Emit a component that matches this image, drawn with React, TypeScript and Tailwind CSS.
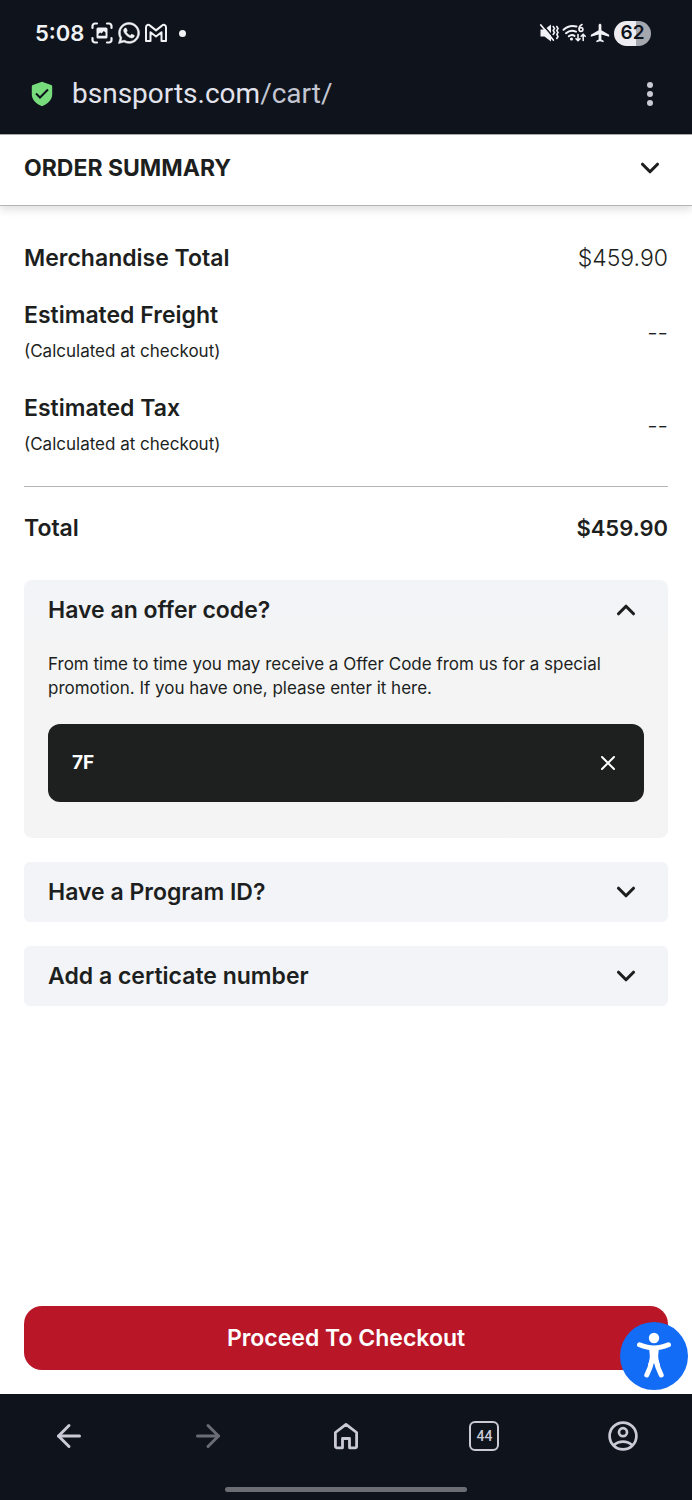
import { useState } from 'react';
import type { ReactNode } from 'react';
import { ArrowLeft, ArrowRight, ChevronDown, ChevronUp, X } from 'lucide-react';
import { FaWhatsapp } from 'react-icons/fa';
import { MdAirplanemodeActive } from 'react-icons/md';

const ScreenshotIcon = () => (
  <svg viewBox="0 0 24 24" className="h-6 w-6" fill="none" stroke="currentColor" strokeWidth="2.2" strokeLinecap="round">
    <path d="M2.5 7V5A2.5 2.5 0 0 1 5 2.500h2M17 2.500h2A2.500 2.500 0 0 1 21.500 5v2M21.500 17v2a2.500 2.500 0 0 1-2.500 2.500h-2M7 21.500H5A2.500 2.500 0 0 1 2.500 19v-2" />
    <path
      d="M8 6.500h8a1.500 1.500 0 0 1 1.500 1.500v8a1.500 1.500 0 0 1-1.500 1.500H8A1.500 1.500 0 0 1 6.500 16V8A1.500 1.500 0 0 1 8 6.500Zm.5 8.300h7v-3.300l-1.700-1.400-2.300 2.300-1.300-.8-1.700 1.400Z"
      fill="currentColor"
      fillRule="evenodd"
      stroke="none"
    />
  </svg>
);

const MailIcon = () => (
  <svg viewBox="0 0 24 20" className="h-5 w-6" fill="none" stroke="currentColor" strokeWidth="2" strokeLinejoin="round">
    <path d="M2 4.200C2 1.800 4.400 1.200 6 2.600l6 4.800 6-4.800c1.600-1.400 4-.8 4 1.600V18h-4.500V9.200L12 13.500 6.500 9.200V18H2Z" />
  </svg>
);

const MuteIcon = () => (
  <svg viewBox="0 0 20 20" className="h-5 w-5" fill="none" stroke="currentColor" strokeLinecap="round">
    <path d="M1.500 6.500h4L12 1.500v17l-6.500-5h-4Z" fill="currentColor" stroke="none" />
    <path d="M3.500 1.500l12.500 14.500" stroke="#0f131c" strokeWidth="1.600" />
    <path d="M1.800 2l12.500 15" strokeWidth="1.800" />
    <path d="M14.200 3.500l1.300 2-1.300 2 1.300 2-1.300 2M17.800 3.500l1.200 2-1.200 2 1.200 2-1.200 2 1.200 2-1.200 2" strokeWidth="1.600" />
  </svg>
);

const WifiIcon = () => (
  <svg viewBox="0 0 24 20" className="h-5 w-6" fill="none" stroke="currentColor" strokeWidth="2" strokeLinecap="round">
    <path d="M1.500 6.800C5.500 3 10 2.200 14.500 3.500M4 10.200c3-2.700 6.500-3.200 10-1.600M6.800 13.300c1.800-1.500 4-1.600 5.700-.4" />
    <circle cx="9.500" cy="16" r="1.600" fill="currentColor" stroke="none" />
    <circle cx="19" cy="6.500" r="1.900" strokeWidth="1.600" />
    <path d="M20 1.500c-1.800.8-2.900 2.500-2.900 4.500" strokeWidth="1.600" />
    <path d="M16 11.500v6M14 15.700l2 2 2-2M21.200 17.500v-6M19.200 13.300l2-2 2 2" strokeWidth="1.600" />
  </svg>
);

const ShieldIcon = () => (
  <svg viewBox="0 0 22 26" className="h-[26px] w-[22px] shrink-0">
    <path d="M11 .8 20.200 4c.7.200 1 .7 1 1.400v8.100c0 5.500-4.600 9.400-10.200 11.700C5.400 22.900.8 19 .8 13.500V5.400C.8 4.700 1.100 4.200 1.800 4Z" fill="#77dd7c" />
    <path d="m5 12.500 4 4 8-8" fill="none" stroke="#0f131c" strokeWidth="2" />
  </svg>
);

const HomeIcon = () => (
  <svg viewBox="0 0 26 28" className="h-7 w-[26px]" fill="none" stroke="currentColor" strokeWidth="2.800" strokeLinejoin="round">
    <path d="M2.400 10.500 13 2.400l10.600 8.100v13.700a1.600 1.600 0 0 1-1.600 1.600h-5.500v-9.300h-7v9.300H4a1.600 1.600 0 0 1-1.600-1.600Z" />
  </svg>
);

const AccountIcon = () => (
  <svg viewBox="0 0 30 30" className="h-[30px] w-[30px]" fill="none" stroke="currentColor" strokeWidth="2.700">
    <circle cx="15" cy="15" r="13.400" />
    <circle cx="15" cy="11.200" r="4" />
    <path d="M5.800 24.300c2.500-2.400 5.600-3.700 9.200-3.700s6.700 1.300 9.200 3.700" />
  </svg>
);

const AccessibilityIcon = () => (
  <svg viewBox="0 0 68 68" className="h-full w-full" fill="none" stroke="#fff" strokeWidth="5" strokeLinecap="round" strokeLinejoin="round">
    <circle cx="34" cy="16" r="5.200" fill="#fff" stroke="none" />
    <path d="M19.500 22.800c4.500 1.800 9.500 3.200 14.500 3.200s10-1.400 14.500-3.200" />
    <path d="M29 25h10l-.8 8.500c0 4 .8 6.500 1.800 9.500h-4L34 40.500 32 43h-4c1-3 1.800-5.500 1.800-9.500Z" fill="#fff" stroke="none" />
    <path d="M32 38.500c-1 5-3 10-5.200 14.500M36 38.500c1 5 3 10 5.200 14.500" />
  </svg>
);

const StatusBar = () => (
  <div className="flex h-[66px] items-center justify-between pr-[41px] pl-[35px] text-[#f1f2f5]">
    <div className="flex items-center gap-[3px]">
      <span className="mr-[3px] font-['Inter',sans-serif] text-[22px] leading-7 font-semibold">5:08</span>
      <ScreenshotIcon />
      <FaWhatsapp className="h-6 w-6" stroke="currentColor" strokeWidth={12} />
      <MailIcon />
      <span className="ml-2 h-[7px] w-[7px] rounded-full bg-[#f1f2f5]" />
    </div>
    <div className="flex items-center gap-[3px]">
      <MuteIcon />
      <WifiIcon />
      <MdAirplanemodeActive className="h-[22px] w-[22px]" />
      <span className="flex h-[25px] w-[37px] items-center justify-center rounded-full bg-linear-to-r from-[#ececf1] from-60% to-[#a4a7ae] to-60% font-['Inter',sans-serif] text-[19px] font-semibold text-[#0f131c]">
        62
      </span>
    </div>
  </div>
);

const AddressBar = () => (
  <div className="flex h-14 items-center pr-9 pl-[31px]">
    <ShieldIcon />
    <a href="#cart" className="ml-[19px] font-['Roboto',sans-serif] text-[28px] leading-9 text-[#e2e3ec]">
      bsnsports.com<span className="text-[#c3c5d0]">/cart/</span>
    </a>
    <button type="button" aria-label="Menu" className="ml-auto flex w-3 flex-col items-center gap-[3px]">
      <span className="h-[6px] w-[6px] rounded-full bg-[#c9cad6]" />
      <span className="h-[6px] w-[6px] rounded-full bg-[#c9cad6]" />
      <span className="h-[6px] w-[6px] rounded-full bg-[#c9cad6]" />
    </button>
  </div>
);

interface RowProps {
  label: string;
  note?: string;
  value: string;
  bold?: boolean;
}

const SummaryRow = ({ label, note, value, bold }: RowProps) => (
  <div className="flex items-center justify-between leading-7">
    <dt>
      <div className="text-[23px] font-semibold">{label}</div>
      {note && <div className="mt-2 text-[17px]">{note}</div>}
    </dt>
    <dd className={bold ? 'text-[22px] font-semibold' : 'text-[23px] font-light'}>{value}</dd>
  </div>
);

interface PanelProps {
  title: string;
  defaultOpen?: boolean;
  children?: ReactNode;
}

const Panel = ({ title, defaultOpen = false, children }: PanelProps) => {
  const [open, setOpen] = useState(defaultOpen);
  const Chevron = open ? ChevronUp : ChevronDown;

  return (
    <section className={open ? 'rounded-lg bg-linear-to-b from-[#f2f4f8] to-[#f4f4f4] to-30%' : 'rounded-md bg-[#f2f4f7]'}>
      <button
        type="button"
        aria-expanded={open}
        onClick={() => setOpen(!open)}
        className="flex h-[60px] w-full items-center justify-between pr-[27px] pl-6 text-[23px] leading-7 font-semibold"
      >
        {title}
        <Chevron className="h-[30px] w-[30px]" strokeWidth={2.5} />
      </button>
      {open && children}
    </section>
  );
};

export default function App() {
  const [code, setCode] = useState('7F');

  return (
    <div className="flex min-h-screen flex-col bg-white font-['Inter',sans-serif] text-[#1d1f1e]">
      <header className="border-b border-[#a9abae] bg-[#0f131c] pb-3">
        <StatusBar />
        <AddressBar />
      </header>

      <button
        type="button"
        className="flex h-[71px] w-full items-center justify-between border-b border-[#b5b5b5] pr-[27px] pb-1 pl-6 shadow-[0_4px_8px_rgba(0,0,0,0.12)]"
      >
        <span className="text-[23px] leading-7 font-bold">ORDER SUMMARY</span>
        <ChevronDown className="h-[30px] w-[30px]" strokeWidth={2.5} />
      </button>

      <main className="flex-1 px-6 pt-[38px] pb-6">
        <dl>
          <div className="flex flex-col gap-[29px] border-b border-[#b3b5b7] pb-7">
            <SummaryRow label="Merchandise Total" value="$459.90" />
            <SummaryRow label="Estimated Freight" note="(Calculated at checkout)" value="--" />
            <SummaryRow label="Estimated Tax" note="(Calculated at checkout)" value="--" />
          </div>
          <div className="pt-[27px] pb-[38px]">
            <SummaryRow label="Total" value="$459.90" bold />
          </div>
        </dl>

        <div className="flex flex-col gap-6">
          <Panel title="Have an offer code?" defaultOpen>
            <div className="px-6 pt-3 pb-9">
              <p className="text-[17px] leading-6">
                From time to time you may receive a Offer Code from us for a special promotion. If you have one, please enter it here.
              </p>
              {code && (
                <div className="mt-6 flex h-[78px] items-center justify-between rounded-xl bg-[#1e201f] px-6 text-white">
                  <span className="text-[19px] leading-7 font-bold">{code}</span>
                  <button type="button" aria-label="Remove offer code" onClick={() => setCode('')}>
                    <X className="h-6 w-6" strokeWidth={2} />
                  </button>
                </div>
              )}
            </div>
          </Panel>
          <Panel title="Have a Program ID?" />
          <Panel title="Add a certicate number" />
        </div>
      </main>

      <div className="relative px-6 pb-6">
        <button type="button" className="h-16 w-full rounded-[18px] bg-[#b91628] text-[23px] leading-7 font-semibold text-white">
          Proceed To Checkout
        </button>
        <button type="button" aria-label="Accessibility options" className="absolute right-1 bottom-1 h-[68px] w-[68px] rounded-full bg-[#126cf5]">
          <AccessibilityIcon />
        </button>
      </div>

      <footer className="bg-[#0f131c] pb-2 text-[#c9cad6]">
        <nav className="grid h-[84px] grid-cols-5">
          <button type="button" aria-label="Back" className="flex items-center justify-center">
            <ArrowLeft className="h-9 w-9" strokeWidth={2} />
          </button>
          <button type="button" aria-label="Forward" disabled className="flex items-center justify-center text-[#6b6d76]">
            <ArrowRight className="h-9 w-9" strokeWidth={2} />
          </button>
          <button type="button" aria-label="Home" className="flex items-center justify-center">
            <HomeIcon />
          </button>
          <button type="button" aria-label="Tabs" className="flex items-center justify-center">
            <span className="flex h-[30px] w-[30px] items-center justify-center rounded-md border-2 border-[#c9cad6] font-['Roboto',sans-serif] text-sm font-medium">
              44
            </span>
          </button>
          <button type="button" aria-label="Account" className="flex items-center justify-center">
            <AccountIcon />
          </button>
        </nav>
        <div className="mx-auto mt-[9px] h-[5px] w-[35%] rounded-full bg-[#6b6d74]" />
      </footer>
    </div>
  );
}
